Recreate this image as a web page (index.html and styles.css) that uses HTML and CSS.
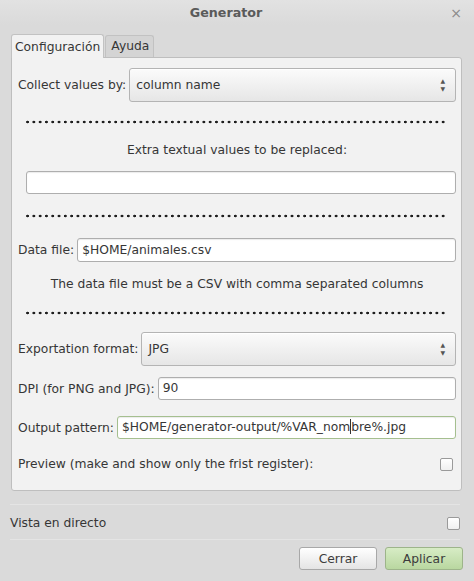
FILE: index.html
```html
<!DOCTYPE html>
<html>
<head>
    <meta charset="UTF-8">
    <title>Generator</title>
    <link rel="stylesheet" href="styles.css">
</head>
<body>

    <div class="window">
        <div class="titlebar">
            <span></span>
            <span class="title">Generator</span>
            <span class="close">&times;</span>
        </div>

        <div class="tabs">
            <div class="tab active">Configuración</div>
            <div class="tab">Ayuda</div>
        </div>

        <div class="panel">
            <div class="row row-combo">
                <label>Collect values by:</label>
                <div class="combo"><span>column name</span><span class="arrows">&#9650;<br>&#9660;</span></div>
            </div>

            <div class="dots dots-1"></div>

            <p class="note note-extra">Extra textual values to be replaced:</p>
            <div class="entry entry-extra"></div>

            <div class="dots dots-2"></div>

            <div class="row row-data">
                <label>Data file:</label>
                <div class="entry">$HOME/animales.csv</div>
            </div>

            <p class="note note-data">The data file must be a CSV with comma separated columns</p>

            <div class="dots dots-3"></div>

            <div class="row row-format">
                <label>Exportation format:</label>
                <div class="combo"><span>JPG</span><span class="arrows">&#9650;<br>&#9660;</span></div>
            </div>

            <div class="row row-dpi">
                <label>DPI (for PNG and JPG):</label>
                <div class="entry">90</div>
            </div>

            <div class="row row-output">
                <label>Output pattern:</label>
                <div class="entry focused">$HOME/generator-output/%VAR_nom<span class="caret"></span>bre%.jpg</div>
            </div>

            <div class="row row-preview">
                <label>Preview (make and show only the frist register):</label>
                <span class="check"></span>
            </div>
        </div>

        <div class="live">
            <label>Vista en directo</label>
            <span class="check"></span>
        </div>

        <div class="actions">
            <button class="btn">Cerrar</button>
            <button class="btn btn-apply">Aplicar</button>
        </div>
    </div>

</body>
</html>
```

FILE: styles.css
```css
html, body {
    margin: 0;
    padding: 0;
}

body {
    font-family: "DejaVu Sans", sans-serif;
    font-size: 12.3px;
    color: #363636;
    background-color: #dcdcdc;
    width: 474px;
    height: 581px;
    overflow: hidden;
}

.window {
    display: flex;
    flex-direction: column;
    height: 581px;
    background-color: #dadada;
}

.titlebar {
    display: grid;
    grid-template-columns: 1fr auto 1fr;
    align-items: center;
    height: 25px;
    background: linear-gradient(#e2e2e2, #dadada);
}

.titlebar .title {
    font-weight: bold;
    font-size: 12.7px;
    color: #5a5a5a;
    margin-right: 22px;
}

.titlebar .close {
    justify-self: end;
    margin-right: 12px;
    color: #8a8a8a;
    font-size: 14px;
}

.tabs {
    display: flex;
    align-items: flex-end;
    margin: 8px 0 0 11px;
    height: 24px;
}

.tab {
    height: 21px;
    line-height: 21px;
    padding: 0 4px 0 5px;
    border: 1px solid #c2c2c2;
    border-bottom: 0;
    border-radius: 3px 3px 0 0;
    background-color: #d4d4d4;
    margin-left: 1px;
}

.tab.active {
    height: 23px;
    line-height: 24px;
    padding: 0 3px;
    background-color: #f2f2f2;
    margin-left: 0;
    position: relative;
    top: 1px;
}

.panel {
    display: flex;
    flex-direction: column;
    margin: 0 12px 0 11px;
    padding: 10px 5px 18px 6px;
    background-color: #f2f2f2;
    border: 1px solid #bebebe;
    border-radius: 0 3px 3px 3px;
    box-sizing: border-box;
    height: 434px;
}

.row {
    display: flex;
    align-items: center;
    gap: 3px;
}

.row label {
    white-space: nowrap;
}

.row .entry,
.row .combo {
    flex: 1;
}

.combo {
    display: flex;
    align-items: center;
    justify-content: space-between;
    height: 34px;
    box-sizing: border-box;
    padding: 0 10px 0 6px;
    border: 1px solid #b4b4b4;
    border-radius: 3px;
    background: linear-gradient(#fbfbfb, #e6e6e6);
    box-shadow: inset 0 1px 0 #ffffff;
}

.combo .arrows {
    font-size: 6px;
    line-height: 8px;
    color: #555;
    text-align: center;
}

.entry {
    height: 24px;
    line-height: 22px;
    box-sizing: border-box;
    padding: 0 4px;
    border: 1px solid #aeaeae;
    border-radius: 3px;
    background-color: #ffffff;
    box-shadow: inset 0 1px 1px rgba(0, 0, 0, 0.08);
    white-space: nowrap;
}

.entry.focused {
    border-color: #a5bf8f;
}

.caret {
    display: inline-block;
    width: 1px;
    height: 15px;
    background-color: #333;
    vertical-align: -3px;
}

.dots {
    height: 4px;
    margin: 0 9px 0 8px;
    background-image: radial-gradient(circle, #1e1e1e 1.2px, transparent 1.6px);
    background-size: 6.3px 4px;
    background-position: -1.6px 0;
    background-repeat: repeat-x;
}

.note {
    margin: 0;
    text-align: center;
    line-height: 16px;
}

.row-combo { margin-top: 0; }
.dots-1 { margin-top: 18px; }
.note-extra { margin-top: 18px; }
.entry-extra { margin: 13px 0 0 8px; height: 23px; }
.dots-2 { margin-top: 20px; }
.row-data { margin-top: 20px; }
.note-data { margin-top: 14px; }
.dots-3 { margin-top: 19px; }
.row-format { margin-top: 17px; }
.row-dpi { margin-top: 11px; }
.row-dpi .entry,
.row-output .entry { height: 23px; line-height: 21px; }
.row-output { margin-top: 16px; }
.row-preview {
    margin-top: 18px;
    justify-content: space-between;
    padding-right: 3px;
}

.check {
    display: inline-block;
    width: 11px;
    height: 11px;
    border: 1px solid #9a9a9a;
    border-radius: 2px;
    background: linear-gradient(#ffffff, #f0f0f0);
}

.live {
    display: flex;
    align-items: center;
    justify-content: space-between;
    margin: 13px 14px 0 10px;
    padding: 11px 0 9px;
    border-top: 1px solid #e4e4e4;
    border-bottom: 1px solid #e4e4e4;
}

.actions {
    display: flex;
    justify-content: flex-end;
    gap: 8px;
    margin: 7px 11px 0 0;
}

.btn {
    width: 78px;
    height: 23px;
    font-family: "DejaVu Sans", sans-serif;
    font-size: 12.3px;
    color: #3c3c3c;
    border: 1px solid #a8a8a8;
    border-radius: 3px;
    background: linear-gradient(#ffffff, #e4e4e4);
}

.btn-apply {
    border-color: #9db48a;
    background: linear-gradient(#d7ecc5, #b9d7a0);
}
```
